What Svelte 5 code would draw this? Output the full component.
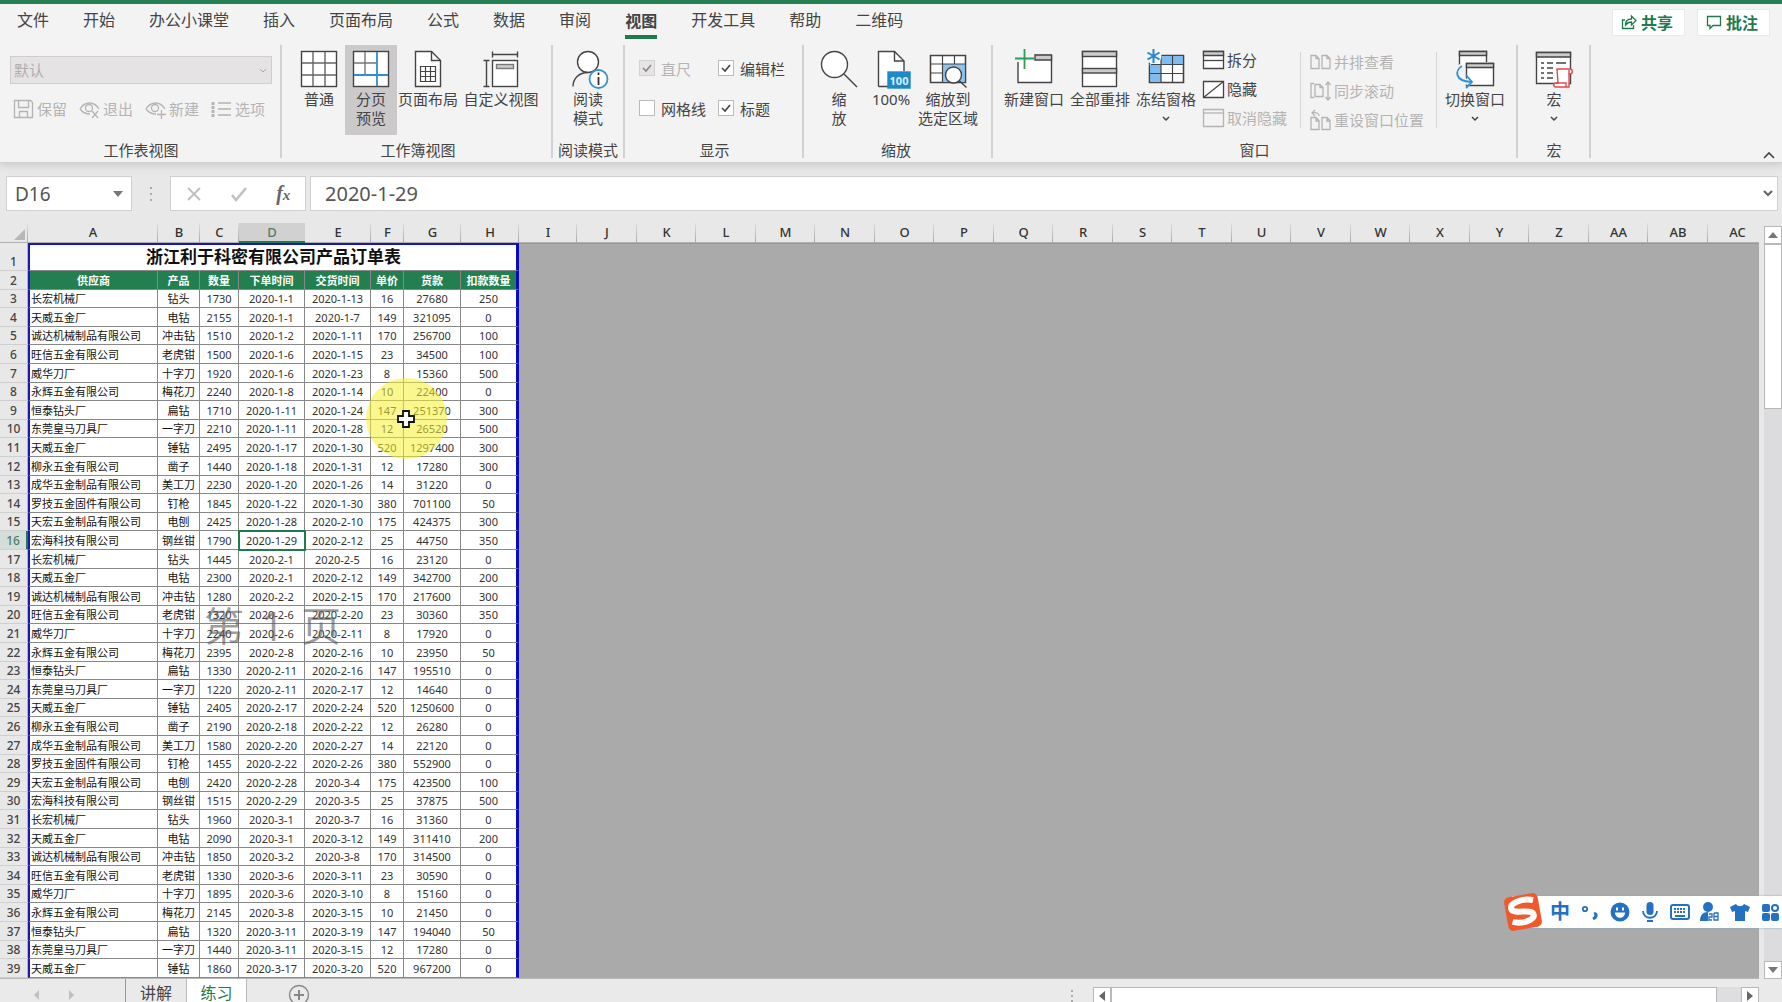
<script>
  const tabs = ['文件', '开始', '办公小课堂', '插入', '页面布局', '公式', '数据', '审阅', '视图', '开发工具', '帮助', '二维码'];

  const suppliers = [
    ['长宏机械厂', '钻头', 16], ['天威五金厂', '电钻', 149], ['诚达机械制品有限公司', '冲击钻', 170],
    ['旺信五金有限公司', '老虎钳', 23], ['威华刀厂', '十字刀', 8], ['永辉五金有限公司', '梅花刀', 10],
    ['恒泰钻头厂', '扁钻', 147], ['东莞皇马刀具厂', '一字刀', 12], ['天威五金厂', '锤钻', 520],
    ['柳永五金有限公司', '凿子', 12], ['成华五金制品有限公司', '美工刀', 14], ['罗技五金固件有限公司', '钉枪', 380],
    ['天宏五金制品有限公司', '电刨', 175], ['宏海科技有限公司', '钢丝钳', 25]
  ];

  const orders = [
    [1730, '1-1', '1-13', 27680, 250], [2155, '1-1', '1-7', 321095, 0], [1510, '1-2', '1-11', 256700, 100],
    [1500, '1-6', '1-15', 34500, 100], [1920, '1-6', '1-23', 15360, 500], [2240, '1-8', '1-14', 22400, 0],
    [1710, '1-11', '1-24', 251370, 300], [2210, '1-11', '1-28', 26520, 500], [2495, '1-17', '1-30', 1297400, 300],
    [1440, '1-18', '1-31', 17280, 300], [2230, '1-20', '1-26', 31220, 0], [1845, '1-22', '1-30', 701100, 50],
    [2425, '1-28', '2-10', 424375, 300], [1790, '1-29', '2-12', 44750, 350], [1445, '2-1', '2-5', 23120, 0],
    [2300, '2-1', '2-12', 342700, 200], [1280, '2-2', '2-15', 217600, 300], [1320, '2-6', '2-20', 30360, 350],
    [2240, '2-6', '2-11', 17920, 0], [2395, '2-8', '2-16', 23950, 50], [1330, '2-11', '2-16', 195510, 0],
    [1220, '2-11', '2-17', 14640, 0], [2405, '2-17', '2-24', 1250600, 0], [2190, '2-18', '2-22', 26280, 0],
    [1580, '2-20', '2-27', 22120, 0], [1455, '2-22', '2-26', 552900, 0], [2420, '2-28', '3-4', 423500, 100],
    [1515, '2-29', '3-5', 37875, 500], [1960, '3-1', '3-7', 31360, 0], [2090, '3-1', '3-12', 311410, 200],
    [1850, '3-2', '3-8', 314500, 0], [1330, '3-6', '3-11', 30590, 0], [1895, '3-6', '3-10', 15160, 0],
    [2145, '3-8', '3-15', 21450, 0], [1320, '3-11', '3-19', 194040, 50], [1440, '3-11', '3-15', 17280, 0],
    [1860, '3-17', '3-20', 967200, 0]
  ];

  const rows = orders.map(([qty, placed, due, total, cut], i) => {
    const [name, product, price] = suppliers[i % suppliers.length];
    return [name, product, qty, '2020-' + placed, '2020-' + due, price, total, cut];
  });

  const heads = ['供应商', '产品', '数量', '下单时间', '交货时间', '单价', '货款', '扣款数量'];
  const letters = [...'ABCDEFGHIJKLMNOPQRSTUVWXYZ', 'AA', 'AB', 'AC'];
  const dataWidths = [130, 42, 39, 66, 66, 33, 57, 58, 58];
  const widths = letters.map((_, i) => dataWidths[i] ?? (i % 2 ? 60 : 59));
  const tableWidth = 28 + widths.reduce((a, b) => a + b, 0);

  let cellName = $state('D16');
  let formula = $state('2020-1-29');
</script>

{#snippet chevron()}
  <svg class="chev" viewBox="0 0 8 5" width="8" height="5"><path d="M1 1l3 3 3-3" fill="none" stroke="#444" stroke-width="1.5" /></svg>
{/snippet}

{#snippet icon(name)}
  <svg class="icon" viewBox="0 0 38 38" width="38" height="38" fill="none" stroke="#444" stroke-width="1.4">
    {#if name === 'normal'}
      <rect x="1.5" y="1.5" width="35" height="35" fill="#fff" />
      <path d="M13 2v34M25 2v34M2 13h34M2 25h34" stroke="#666" />
    {:else if name === 'break'}
      <rect x="1.5" y="1.5" width="35" height="35" fill="#fff" />
      <path d="M13 2v22M2 13h22" stroke="#777" />
      <path d="M25 2v34M2 25h34" stroke="#2b8fd0" stroke-width="1.8" />
    {:else if name === 'layout'}
      <path d="M6.500 1.500h16l9 9v26h-25z" fill="#fff" /><path d="M22.500 1.500v9h9" />
      <path d="M11.500 16.500h15v15h-15zM11.500 21.500h15M11.500 26.500h15M16.500 16.500v15M21.500 16.500v15" stroke-width="1.2" />
    {:else if name === 'custom'}
      <rect x="10.500" y="10.500" width="25" height="26" fill="#fff" /><rect x="14.500" y="14.500" width="17" height="4" fill="#ccc" stroke="#777" />
      <path d="M10.500 4.500h25M10.500 1.500v6M35.500 1.500v6M4.500 10.500v26M1.500 10.500h6M1.500 36.500h6" />
    {:else if name === 'read'}
      <circle cx="19" cy="12" r="10.500" fill="#fff" /><path d="M4 36.500c0-8 6-14 15-14" />
      <circle cx="29.500" cy="29" r="9" fill="#fff" stroke="#3a93cf" stroke-width="1.800" /><path d="M29.500 27v8M29.500 22.500v2.500" stroke="#333" stroke-width="1.800" />
    {:else if name === 'zoom'}
      <circle cx="14.500" cy="14.500" r="13" fill="#fff" /><path d="M24 24l13 13" />
    {:else if name === 'hundred'}
      <path d="M6.500 36.500v-35h16l9.500 9.500v10" fill="#fff" /><path d="M6.500 36.500h10M22.500 1.500v9.500h9.500" />
      <rect x="16" y="22" width="22" height="16" fill="#1f88c9" stroke="#1f88c9" /><text x="27" y="35" class="badge">100</text>
    {:else if name === 'selection'}
      <path d="M1.500 5.500h35v27h-35z" fill="#fff" /><path d="M14 14h22v18H14z" fill="#8cc4ef" stroke="none" />
      <path d="M1.500 14h35M1.500 23h12M13.500 5.500v27M25.500 5.500v8M1.500 5.500h35v27h-35z" stroke-width="1.200" />
      <circle cx="24.500" cy="25" r="8" fill="#fff" /><path d="M30 30.500l7.500 7" />
    {:else if name === 'newwin'}
      <path d="M3 12v20.500h33.500v-27H20" fill="#fff" /><path d="M0-1h19v12H0z" fill="#f4f3f3" stroke="none" /><path d="M20 5h16.500v5H20z" fill="#ccc" /><path d="M9.500-1v20M0 8.500h19" stroke="#2e9c5a" stroke-width="1.800" />
    {:else if name === 'arrange'}
      <rect x="1.500" y="1.500" width="34" height="35" fill="#fff" /><rect x="1.500" y="1.500" width="34" height="5" fill="#ccc" />
      <rect x="1.500" y="18.500" width="34" height="4.500" fill="#ccc" />
    {:else if name === 'freeze'}
      <path d="M2.500 5.500h34v27h-34z" fill="#fff" /><path d="M14 5.500h22.500v9H14zM2.500 14.500H14v18H2.500z" fill="#7fbdf0" stroke="none" />
      <path d="M14 5.500h22.500v27h-34v-17M14 5.500v27M25.500 5.500v27M2.500 23.500h34M4 14.500h32.500" stroke-width="1.200" />
      <circle cx="6.500" cy="6" r="8" fill="#f4f3f3" stroke="none" /><path d="M6.500-1v14M.500 2.500l12 7M.500 9.500l12-7" stroke="#2388d0" stroke-width="2" />
    {:else if name === 'switch'}
      <path d="M3.500 16V1.500h27V12" fill="#fff" /><path d="M3.500 1.500h27v4h-27z" fill="#ccc" />
      <path d="M10.500 13.500h27v22h-27z" fill="#fff" /><path d="M10.500 13.500h27v4h-27z" fill="#ccc" />
      <path d="M6 16c-7 5-6 16 9 16" stroke="#f4f3f3" stroke-width="6" /><path d="M6 16c-7 4-8 15 9 16M10 25l6 7-6 6" stroke="#2f93d2" stroke-width="1.800" />
    {:else if name === 'macro'}
      <path d="M1.500 2.500h34v31h-34z" fill="#fff" /><path d="M1.500 2.500h34v4.500h-34z" fill="#ccc" />
      <path d="M6 13h3M12 13h6M21 13h10M6 18h3M12 18h6M6 23h3M12 23h6M6 28h3M12 28h6" />
      <path d="M22 19h13c3 0 3 5 0 5h-1v13H21c-3 0-3-4 0-4h2z" fill="#fff" stroke="#e2474d" /><path d="M34 20v4M21 33h10v4" stroke="#e2474d" />
    {/if}
  </svg>
{/snippet}

{#snippet small(name)}
  <svg class="sicon" viewBox="0 0 21 20" width="21" height="20" fill="none" stroke="currentColor" stroke-width="1.300">
    {#if name === 'save'}
      <path d="M1.500 1.500h16l2 2v15h-18zM5.500 1.500v7h10v-7M6.500 18.500v-6h8v6" />
    {:else if name === 'exit' || name === 'add'}
      <path d="M1 10c5-8 14-8 19 0M1 10c3 4 6 5 10 5" /><circle cx="10" cy="9" r="3.500" />
      {#if name === 'exit'}<path d="M13 12l6 7M19 12l-6 7" />{:else}<path d="M16.500 11v9M12 15.500h9" />{/if}
    {:else if name === 'options'}
      <path d="M7 4h13M7 10h13M7 16h13" /><path d="M2 3v15" stroke-width="3" stroke-dasharray="3 1" />
    {:else if name === 'split'}
      <path d="M.500 1.500h20v17H.500z" fill="#fff" /><path d="M.500 1.500h20v4H.500z" fill="#ccc" /><path d="M.500 10.500h20" />
    {:else if name === 'hide'}
      <path d="M.500 2.500h20v16H.500z" fill="#fff" /><path d="M.500 18.500l20-16" />
    {:else if name === 'unhide'}
      <path d="M.500 1.500h20v17H.500z" /><path d="M.500 5h20" />
    {:else if name === 'side'}
      <path d="M1 3.500h5l3 3v10H1zM12 3.500h5l3 3v10h-8zM6 3.500v3h3M17 3.500v3h3" />
    {:else if name === 'sync'}
      <path d="M4 2.500H1v14h3M5 3.500h5l3 3v9H5zM10 3.500v3h3M18 1v18M15.500 4L18 1l2.500 3M15.500 16l2.500 3 2.500-3" />
    {:else if name === 'reset'}
      <path d="M1 7.500h5l3 3v9H1zM12 7.500h5l3 3v9h-8zM6 8v3h3M17 8v3h3M9 6c0-3-3-4-7-3M5 0L2 3l3 3" />
    {/if}
  </svg>
{/snippet}

{#snippet big(name, lines, cls = '', drop = false)}
  <button class="big {cls}">
    {@render icon(name)}
    {#each lines as line}<span>{line}</span>{/each}
    {#if drop}{@render chevron()}{/if}
  </button>
{/snippet}

{#snippet item(name, text, off = false)}
  <button class="item" disabled={off}>{@render small(name)}<span>{text}</span></button>
{/snippet}

<div class="app">
  <header class="ribbon">
    <div class="topline"></div>
    <div class="tabbar">
      <nav>
        {#each tabs as t}<button class:active={t === '视图'}>{t}</button>{/each}
      </nav>
      <div class="actions">
        <button>
          <svg viewBox="0 0 16 16" width="16" height="16" fill="none" stroke="#217a4b" stroke-width="1.300"><path d="M4 6H1.500v8.500h11V11M4.500 11c0-4 2-6 6-6V2l4.500 4.500-4.500 4.500V8c-3 0-4.500 1-6 3z" /></svg>共享
        </button>
        <button>
          <svg viewBox="0 0 16 16" width="16" height="16" fill="none" stroke="#217a4b" stroke-width="1.300"><path d="M1.500 2.500h13v9H7l-3 3v-3H1.500z" /></svg>批注
        </button>
      </div>
    </div>
    <div class="groups">
      <section class="g-sheet">
        <div class="body">
          <select disabled aria-label="工作表视图"><option>默认</option></select>
          <div class="line">
            {@render item('save', '保留', true)}{@render item('exit', '退出', true)}{@render item('add', '新建', true)}{@render item('options', '选项', true)}
          </div>
        </div>
        <h2>工作表视图</h2>
      </section>
      <section class="g-book">
        <div class="body">
          {@render big('normal', ['普通'], 'w52')}{@render big('break', ['分页', '预览'], 'w52 on')}{@render big('layout', ['页面布局'], 'w62')}{@render big('custom', ['自定义视图'], 'w84')}
        </div>
        <h2>工作簿视图</h2>
      </section>
      <section class="g-read">
        <div class="body">{@render big('read', ['阅读', '模式'], 'w62')}</div>
        <h2>阅读模式</h2>
      </section>
      <section class="g-show">
        <div class="body">
          <label class="off"><input type="checkbox" checked disabled />直尺</label>
          <label><input type="checkbox" checked />编辑栏</label>
          <label><input type="checkbox" />网格线</label>
          <label><input type="checkbox" checked />标题</label>
        </div>
        <h2>显示</h2>
      </section>
      <section class="g-zoom">
        <div class="body">{@render big('zoom', ['缩', '放'], 'w52')}{@render big('hundred', ['100%'], 'w52')}{@render big('selection', ['缩放到', '选定区域'], 'w62')}</div>
        <h2>缩放</h2>
      </section>
      <section class="g-window">
        <div class="body">
          {@render big('newwin', ['新建窗口'], 'w66')}{@render big('arrange', ['全部重排'], 'w66')}{@render big('freeze', ['冻结窗格'], 'w66', true)}
          <div class="list first">{@render item('split', '拆分')}{@render item('hide', '隐藏')}{@render item('unhide', '取消隐藏', true)}</div>
          <div class="list second">{@render item('side', '并排查看', true)}{@render item('sync', '同步滚动', true)}{@render item('reset', '重设窗口位置', true)}</div>
          {@render big('switch', ['切换窗口'], 'w66', true)}
        </div>
        <h2>窗口</h2>
      </section>
      <section class="g-macro">
        <div class="body">{@render big('macro', ['宏'], 'w62', true)}</div>
        <h2>宏</h2>
      </section>
      <button class="collapse" aria-label="折叠功能区"><svg viewBox="0 0 12 8" width="12" height="8"><path d="M1 7l5-5 5 5" fill="none" stroke="#444" stroke-width="1.600" /></svg></button>
    </div>
  </header>

  <div class="formula">
    <div class="namebox">
      <input aria-label="名称框" bind:value={cellName} />
      <svg viewBox="0 0 10 6" width="10" height="6"><path d="M0 0h10L5 6z" fill="#777" /></svg>
    </div>
    <svg class="dots" viewBox="0 0 4 16" width="4" height="16" fill="#aaa"><path d="M1 1h2v2H1zM1 7h2v2H1zM1 13h2v2H1z" /></svg>
    <div class="fx">
      <button aria-label="取消"><svg viewBox="0 0 16 16" width="16" height="16"><path d="M2 2l12 12M14 2L2 14" stroke="#c0c0c0" stroke-width="2" /></svg></button>
      <button aria-label="输入"><svg viewBox="0 0 16 16" width="16" height="16"><path d="M1 9l4 5L15 2" fill="none" stroke="#c0c0c0" stroke-width="2.500" /></svg></button>
      <button class="f">f<small>x</small></button>
    </div>
    <div class="entry">
      <input aria-label="编辑栏" bind:value={formula} />
      <svg viewBox="0 0 10 7" width="10" height="7"><path d="M1 1l4 4 4-4" fill="none" stroke="#666" stroke-width="2.200" /></svg>
    </div>
  </div>

  <main>
    <div class="sheet">
      <table style="width: {tableWidth}px">
        <colgroup><col class="numcol" />{#each widths as w}<col style="width: {w}px" />{/each}</colgroup>
        <thead>
          <tr>
            <th class="corner"><svg viewBox="0 0 11 11" width="11" height="11"><path d="M11 0v11H0z" fill="#b8b8b8" /></svg></th>
            {#each letters as l}<th class:sel={l === 'D'}>{l}</th>{/each}
          </tr>
        </thead>
        <tbody>
          <tr class="title"><th>1</th><td colspan="8">浙江利于科密有限公司产品订单表</td><td class="void" colspan="21" rowspan="39"></td></tr>
          <tr class="heads"><th>2</th>{#each heads as h}<td>{h}</td>{/each}</tr>
          {#each rows as r, i}
            <tr class:current={i === 13}>
              <th>{i + 3}</th>
              {#each r as c, j}<td class:picked={i === 13 && j === 3}>{c}</td>{/each}
            </tr>
          {/each}
        </tbody>
      </table>
      <div class="watermark"><span>第</span><span>1</span><span>页</span></div>
      <div class="spot"></div>
      <svg class="cursor" viewBox="0 0 18 18" width="18" height="18"><path d="M6 1h6v5h5v6h-5v5H6v-5H1V6h5z" fill="#fff" stroke="#111" stroke-width="1.800" /></svg>
    </div>
    <div class="vscroll">
      <button aria-label="向上"><svg viewBox="0 0 10 6" width="10" height="6"><path d="M0 6h10L5 0z" fill="#777" /></svg></button>
      <div class="vthumb"></div>
      <div class="vtrack"></div>
      <button aria-label="向下"><svg viewBox="0 0 10 6" width="10" height="6"><path d="M0 0h10L5 6z" fill="#777" /></svg></button>
    </div>
  </main>

  <footer>
    <button class="arrow" aria-label="上一个"><svg viewBox="0 0 5 10" width="5" height="10"><path d="M5 0v10L0 5z" fill="#c0c0c0" /></svg></button>
    <button class="arrow" aria-label="下一个"><svg viewBox="0 0 5 10" width="5" height="10"><path d="M0 0v10l5-5z" fill="#c0c0c0" /></svg></button>
    <button class="stab">讲解</button>
    <button class="stab cur">练习</button>
    <button class="plus" aria-label="新工作表"><svg viewBox="0 0 22 22" width="22" height="22" fill="none" stroke="#888"><circle cx="11" cy="11" r="9.500" stroke-width="1.400" /><path d="M11 6v10M6 11h10" stroke-width="2" /></svg></button>
    <svg class="dots low" viewBox="0 0 4 16" width="4" height="16" fill="#aaa"><path d="M1 1h2v2H1zM1 6h2v2H1zM1 11h2v2H1z" /></svg>
    <div class="hscroll">
      <button aria-label="向左"><svg viewBox="0 0 6 10" width="6" height="10"><path d="M6 0v10L0 5z" fill="#666" /></svg></button>
      <div class="hthumb"></div>
      <div class="htrack"></div>
      <button aria-label="向右"><svg viewBox="0 0 6 10" width="6" height="10"><path d="M0 0v10l6-5z" fill="#666" /></svg></button>
    </div>
  </footer>

  <div class="ime">
    <svg class="sogou" viewBox="0 0 40 40" width="40" height="40">
      <g transform="rotate(-10 20 20)"><rect x="3" y="3" width="34" height="34" rx="5" fill="#f0592b" /><path d="M32 10C22 6 8 9 9 15s20 3 21 9-13 8-22 4" fill="none" stroke="#fff" stroke-width="6" /></g>
    </svg>
    <span class="zh">中</span>
    <svg viewBox="0 0 20 20" width="20" height="20" fill="none" stroke="#2470c2" stroke-width="1.800"><circle cx="5" cy="7" r="2.200" /><path d="M14 12c3-1 3 3-1 5" stroke-width="3" /></svg>
    <svg viewBox="0 0 20 20" width="20" height="20"><circle cx="10" cy="10" r="9.500" fill="#2470c2" /><path d="M5 10.500h10c0 7-10 7-10 0zM6 5.500h2v3H6zM12 5.500h2v3h-2z" fill="#fff" /></svg>
    <svg viewBox="0 0 20 20" width="20" height="20"><rect x="6.500" y="0" width="7" height="13" rx="3.500" fill="#2470c2" /><path d="M3 9c0 9 14 9 14 0M7 19h6" fill="none" stroke="#2470c2" stroke-width="1.800" /></svg>
    <svg viewBox="0 0 20 20" width="20" height="20"><rect x="1" y="3" width="18" height="14" rx="2" fill="none" stroke="#2470c2" stroke-width="2" /><path d="M4 7h12M4 10h12" stroke="#2470c2" stroke-width="2" stroke-dasharray="2 1" /><path d="M5 14h10" stroke="#2470c2" stroke-width="2" /></svg>
    <svg viewBox="0 0 20 20" width="20" height="20"><circle cx="8" cy="5" r="5" fill="#2470c2" /><path d="M0 19c0-6 3-9 8-9s8 3 8 9z" fill="#2470c2" /><rect x="8" y="10" width="12" height="9" rx="1" fill="#fff" /><path d="M9 12h3v3H9v3h3M14 11v7h4v-7h-4M14 14.500h4" fill="none" stroke="#2470c2" stroke-width="1.300" /></svg>
    <svg viewBox="0 0 20 20" width="20" height="20"><path d="M6 2c2 3 6 3 8 0l6 3-2 5-3-1v10H5V9L2 10 0 5z" fill="#2470c2" /></svg>
    <svg viewBox="0 0 20 20" width="20" height="20" fill="#2470c2"><rect x="2" y="2" width="8" height="8" rx="2" /><rect x="2" y="11" width="8" height="8" rx="2" /><rect x="11" y="11" width="8" height="8" rx="2" /><circle cx="15" cy="6" r="3" fill="none" stroke="#2470c2" stroke-width="2" /></svg>
  </div>
</div>

<style>
  :global(body) { margin: 0; overflow: hidden; }
  .app { position: relative; display: flex; flex-direction: column; height: 100vh; overflow: hidden; background: #e9e8e9; color: #444; font-family: 'Noto Sans', 'Noto Sans CJK SC', sans-serif; font-size: 15px; }
  button, input, select { font: inherit; color: inherit; border: 0; padding: 0; margin: 0; background: none; }
  button { cursor: pointer; white-space: nowrap; }
  svg { display: block; flex: none; overflow: visible; }

  .ribbon { background: #f4f3f3; border-bottom: 1px solid #d2d0d0; box-shadow: 0 2px 8px #c9c6c6; }
  .topline { height: 4px; background: #267f52; }
  .tabbar { display: flex; justify-content: space-between; align-items: flex-start; height: 41px; }
  nav { display: flex; gap: 34px; padding-left: 17px; }
  nav button { height: 35px; font-size: 16px; line-height: 33px; padding-bottom: 2px; box-sizing: border-box; }
  nav button.active { font-weight: 700; line-height: 31px; padding: 2px 0 0; border-bottom: 4px solid #217a4b; }
  .actions { display: flex; gap: 12px; padding: 5px 12px 0 0; }
  .actions button { display: flex; align-items: center; gap: 4px; height: 27px; padding: 0 11px 2px 8px; background: #fff; border: 1px solid #eae8e8; color: #217a4b; font-size: 16px; font-weight: 700; }

  .groups { display: flex; position: relative; height: 117px; }
  section { display: flex; flex-direction: column; border-right: 2px solid #d2d0d0; height: 113px; box-sizing: border-box; }
  .body { display: flex; height: 96px; flex: none; }
  h2 { margin: 0; font-size: 15px; font-weight: 400; line-height: 18px; text-align: center; }
  .g-sheet { padding: 0 8px 0 10px; }
  .g-sheet .body { flex-direction: column; }
  .g-sheet select { appearance: none; width: 262px; height: 28px; margin-top: 11px; padding-left: 3px; border: 1px solid #cfcdcd; background: #e5e3e4 url("data:image/svg+xml,%3Csvg xmlns='http://www.w3.org/2000/svg' width='8' height='5'%3E%3Cpath d='M1 1l3 3 3-3' fill='none' stroke='%23aaa'/%3E%3C/svg%3E") no-repeat right 4px center; color: #b0aeae; opacity: 1; }
  .line { display: flex; gap: 12px; margin: 15px 0 0 3px; }
  .g-book { padding: 0 8px 0 11px; }
  .g-read { padding: 0 4px; }
  .g-show { padding: 0 12px 0 14px; }
  .g-show .body { display: grid; grid-template-columns: 79px 72px; grid-template-rows: 40px 40px; align-items: center; padding-top: 3px; box-sizing: border-box; }
  .g-zoom { padding: 0 12px 0 9px; }
  .g-window { padding: 0 8px; }
  .g-macro { padding: 0 4px 0 5px; }

  .big { display: flex; flex-direction: column; align-items: center; height: 90px; padding-top: 5px; box-sizing: border-box; line-height: 19px; }
  .big .icon { margin-bottom: 2px; }
  .big .chev { margin-top: 7px; }
  .w52 { width: 52px; } .w62 { width: 62px; } .w66 { width: 66px; } .w84 { width: 84px; }
  .on { background: #cbc9ca; }
  .item { display: flex; align-items: center; gap: 3px; height: 20px; line-height: 20px; }
  .item:disabled { color: #b5b3b3; }
  .list { display: flex; flex-direction: column; gap: 9px; padding-top: 5px; }
  .first { width: 97px; padding-left: 4px; }
  .second { height: 76px; margin: 7px 5px 0 0; padding: 0 12px 0 9px; border: 1px solid #d8d6d6; border-width: 0 1px; box-sizing: border-box; }
  .badge { font: 700 11px 'Open Sans', sans-serif; text-anchor: middle; fill: #d9f1ff; stroke: none; }
  .collapse { margin: 104px 7px 0 auto; height: 12px; }

  label { display: flex; align-items: center; gap: 6px; white-space: nowrap; }
  label.off { color: #b5b3b3; }
  input[type='checkbox'] { appearance: none; width: 16px; height: 16px; flex: none; border: 1px solid #bbb; background: #fff; }
  input[type='checkbox']:checked { background: #fff url("data:image/svg+xml,%3Csvg xmlns='http://www.w3.org/2000/svg' width='14' height='14'%3E%3Cpath d='M3 7l3 3 5-6' fill='none' stroke='%23444' stroke-width='1.6'/%3E%3C/svg%3E") center no-repeat; }
  input[type='checkbox']:disabled { background-color: #dddbdb; opacity: .6; }

  .formula { display: flex; align-items: center; height: 35px; padding: 13px 4px 0 6px; font-size: 19px; color: #555; }
  .formula > div { display: flex; align-items: center; height: 35px; box-sizing: border-box; background: #fff; border: 1px solid #d0cece; }
  .namebox { width: 126px; padding: 0 8px; }
  .namebox input { width: 98px; }
  .dots { margin: 0 17px; }
  .fx { width: 136px; justify-content: space-around; margin-right: 4px; }
  .fx .f { font: italic 700 20px 'Liberation Serif', serif; color: #666; }
  .fx small { font-size: 15px; }
  .entry { flex: 1; padding: 0 4px 0 14px; }
  .entry input { flex: 1; font-size: 20px; }
  input { outline: none; min-width: 0; }

  main { display: flex; flex: 1; min-height: 0; padding-top: 12px; }
  .sheet { position: relative; flex: 1; overflow: hidden; border-bottom: 1px solid #b8b8b8; }
  table { table-layout: fixed; border-collapse: separate; border-spacing: 0; }
  .numcol { width: 28px; }
  td, th { padding: 0; overflow: hidden; white-space: nowrap; box-sizing: border-box; text-align: center; }
  tr { height: 19px; }
  tbody tr:nth-child(5n + 3), tbody tr:nth-child(5n) { height: 18px; }
  thead tr { height: 20px; }
  thead th { height: 20px; font-size: 13px; font-weight: 500; line-height: 17px; color: #333; background: linear-gradient(#e0dfdf, #a8a8a8) right / 1px 100% no-repeat; border-bottom: 1px solid #b0b0b0; }
  thead th.sel { background: #d2d1d1; color: #4c7c67; border-bottom: 2px solid #217a4b; }
  .corner svg { margin: 3px 0 0 14px; }
  tbody th { font-size: 12px; font-weight: 500; line-height: 17px; color: #444; border-right: 1px solid #b4b4b4; border-bottom: 1px solid #cfcfcf; }
  tbody td { background: #fff; color: #333; font-size: 11px; line-height: 17px; border-right: 1px solid #888; border-bottom: 1px solid #888; }
  tbody td:nth-child(2) { border-left: 2px solid #1818b8; text-align: left; padding-left: 1px; color: #111; }
  tbody td:nth-child(3) { color: #111; }
  tbody td:nth-child(9) { border-right: 3px solid #0a0ac0; }
  tbody tr.title { height: 28px; }
  .title th { vertical-align: bottom; }
  .title td:nth-child(2) { font-size: 17px; font-weight: 700; line-height: 24px; text-align: center; vertical-align: top; border-top: 2px solid #1818b8; border-right: 3px solid #0a0ac0; }
  tbody td.void { background: #aaa; border: 0; border-top: 1px solid #999; }
  tbody .heads td:nth-child(n) { background: #237f50; color: #fff; font-weight: 700; text-align: center; padding: 0; }
  .current th { background: #d5dddb; color: #4c7c67; border-right: 2px solid #217a4b; }
  tbody td.picked { outline: 2px solid #217a4b; outline-offset: -1px; }

  .watermark { position: absolute; left: 204px; top: 373px; display: flex; gap: 17px; font-size: 40px; line-height: 60px; color: rgba(90, 90, 90, .6); }
  .spot { position: absolute; left: 366px; top: 155px; width: 81px; height: 81px; border-radius: 50%; background: rgba(246, 240, 50, .55); }
  .cursor { position: absolute; left: 397px; top: 187px; }

  .vscroll { display: flex; flex-direction: column; width: 18px; padding: 3px 0 0 5px; }
  .vscroll button, .hscroll button { display: grid; place-items: center; background: #fff; border: 1px solid #b8b8b8; box-sizing: border-box; }
  .vscroll button { height: 18px; }
  .vthumb { flex: 163; background: #fff; border: 1px solid #b8b8b8; }
  .vtrack { flex: 554; background: #dcdbde; }

  footer { display: flex; height: 23px; background: #ebeaeb; }
  .arrow { width: 35px; display: flex; align-items: center; justify-content: center; padding-top: 8px; }
  .arrow:first-child { margin-left: 19px; }
  .stab { width: 61px; height: 23px; padding-top: 6px; font-size: 16px; line-height: 17px; border-left: 1px solid #999; box-sizing: border-box; }
  .arrow + .stab { margin-left: 36px; }
  .stab.cur { background: #fff; color: #217a4b; border-color: #bbb; border-right: 1px solid #bbb; }
  .plus { margin: 5px auto 0 41px; height: 22px; }
  .low { margin: 10px 19px 0 0; }
  .hscroll { display: flex; flex: none; width: 37.4vw; margin: 8px 23px 0 0; height: 20px; }
  .hscroll button { width: 18px; height: 18px; }
  .hthumb { flex: 1; background: #fff; border: 1px solid #b8b8b8; }
  .htrack { width: 24px; background: #dedee1; }

  .ime { position: absolute; right: 0; top: 896px; display: flex; align-items: center; gap: 10px; height: 32px; padding: 0 2px 0 0; background: #fff; box-shadow: 0 0 2px #8aa8d0; }
  .sogou { margin: 0 -3px 0 -9px; }
  .zh { font-size: 20px; line-height: 28px; font-weight: 700; color: #2470c2; }
</style>
